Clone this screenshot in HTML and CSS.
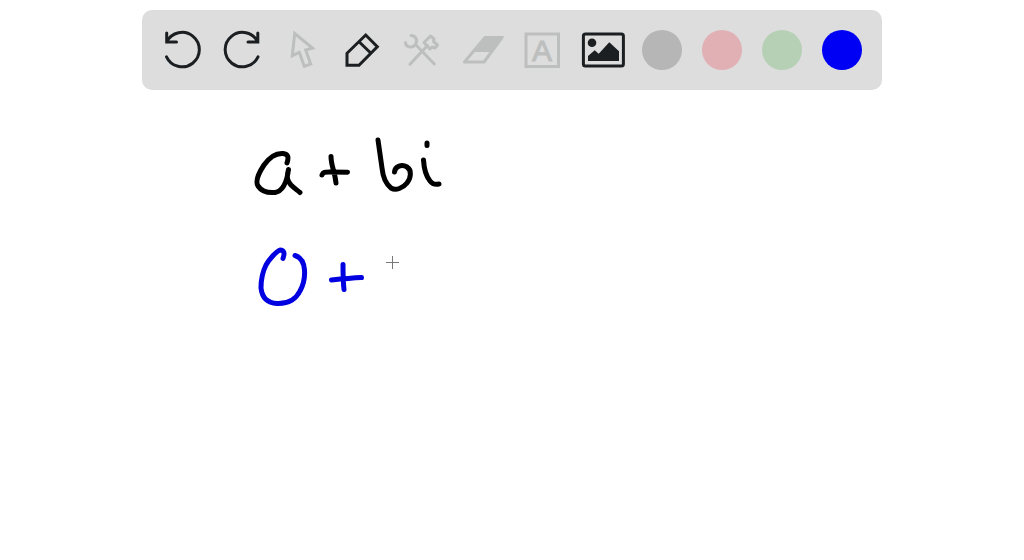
FILE: index.html
```
<!DOCTYPE html>
<html lang="en">
<head>
    <meta charset="UTF-8">
    <meta name="viewport" content="width=device-width, initial-scale=1.0">
    <title>Whiteboard</title>
    <link rel="stylesheet" href="styles.css">
</head>
<body>
    <div class="toolbar">
        <button class="tool" type="button" aria-label="Undo">
            <svg class="icon" viewBox="-2 -2 44 44">
                <path d="M4.700 3V12H14.500M4.700 12A17.200 17.200 0 1 1 4.500 26.800"/>
            </svg>
        </button>
        <button class="tool" type="button" aria-label="Redo">
            <svg class="icon" viewBox="-2 -2 44 44">
                <path d="M35.800 3V12H26M35.800 12A17.200 17.200 0 1 0 36 26.800"/>
            </svg>
        </button>
        <button class="tool muted" type="button" aria-label="Select">
            <svg class="icon" viewBox="-2 -2 44 44">
                <path d="M12.700 3.500L30.500 18L23.700 20L28.700 34L22.300 36.300L17.300 22.300L10.300 25.700Z"/>
            </svg>
        </button>
        <button class="tool" type="button" aria-label="Pen">
            <svg class="icon" viewBox="-2 -2 44 44">
                <path d="M23.700 5L35.300 16.700L17 35.300H5V23.300ZM17.300 12L28.700 23"/>
            </svg>
        </button>
        <button class="tool muted" type="button" aria-label="Tools">
            <svg class="icon soft" viewBox="-2 -2 44 44">
                <path d="M9 5.500C14 5.500 16 10.500 13.500 14.500C10 19 3.500 17 3.500 12.500M14 15L32.300 34"/>
                <path d="M8 34.300L25.500 15.500M22 12.500L28.500 6L32 9L31.500 11.500L35.500 15L33 18L30 17L28 19Z"/>
            </svg>
        </button>
        <button class="tool muted" type="button" aria-label="Eraser">
            <svg class="icon soft" viewBox="-2 -2 44 44">
                <path d="M23 7.500H40L22 32H2.500Z"/>
                <path class="solid" d="M23 6H42L30.500 22H9.500Z"/>
            </svg>
        </button>
        <button class="tool muted" type="button" aria-label="Text">
            <svg class="icon" viewBox="-2 -2 44 44">
                <rect x="4" y="4" width="32.500" height="32.500"/>
                <text class="letter" x="20" y="31">A</text>
            </svg>
        </button>
        <button class="tool" type="button" aria-label="Image">
            <svg class="icon" viewBox="-2 -2 44 44">
                <rect x="1.400" y="4" width="40" height="32" rx="2"/>
                <circle class="solid" cx="10" cy="12.700" r="4.300"/>
                <path class="solid" d="M6 31V26L12.700 20.300L16.700 23.700L27.300 12.300L37 21.300V31Z"/>
            </svg>
        </button>
        <label class="swatch"><input class="gray" type="radio" name="color" aria-label="Gray"></label>
        <label class="swatch"><input class="pink" type="radio" name="color" aria-label="Pink"></label>
        <label class="swatch"><input class="green" type="radio" name="color" aria-label="Green"></label>
        <label class="swatch"><input class="blue" type="radio" name="color" aria-label="Blue" checked></label>
    </div>

    <!-- pen strokes on the board -->
    <svg class="board" viewBox="142 90 740 460">
        <g class="ink">
            <path d="M287 163C289 157 288 154 283 153.500C276 153 269 158 264 165C258 174 255 181 258 186C262 192 269 193 275 192.500C284 191 287 181 288.500 169.500C286 179 288 181 291 185C294 188 297 190 300 192.500"/>
            <path d="M322 175C323 172 325 172 329 172L347.500 172.300M331 156.500C331 166 335 172 336 183"/>
            <path d="M378 140L382 168C383 178 386 184 391 188C396 191 403 188 407 183C411 178 412 170 407 167C402 164 395 166 394.500 172"/>
            <path d="M427 143V145.500M423.500 160C424 169 426 176 430 181C433 185 436 184.500 439 184"/>
        </g>
        <g class="ink ink-blue">
            <path d="M283 258.500C285 253 284 250 280 250C277 251 270 258 266 265C262 273 261 281 261 288C262 297 267 303 277 303.500C289 304 296 299 300 291C304 284 305 277 304.500 270C304 262 300 257 295 255.500"/>
            <path d="M331.500 280C341 279 351 278 361.500 277.500M343 264.500C343 273 343 281 344 289.500"/>
        </g>
        <path class="crosshair" d="M386 262.500H399M392.500 256V269"/>
    </svg>
</body>
</html>
```

FILE: styles.css
```
* {
    box-sizing: border-box;
}

body {
    margin: 0;
    padding: 10px;
    background: #fff;
    font-family: "Liberation Sans", Arial, sans-serif;
}

.toolbar {
    display: flex;
    justify-content: center;
    width: fit-content;
    margin: 0 auto;
    padding: 10px;
    background: #ddd;
    border-radius: 10px;
}

.tool,
.swatch {
    display: flex;
    align-items: center;
    justify-content: center;
    width: 60px;
    height: 60px;
    padding: 0;
    border: none;
    background: none;
    color: #1c1f21;
    cursor: pointer;
}

.tool.muted {
    color: #bdbfbe;
}

.icon {
    width: 44px;
    height: 44px;
    overflow: visible;
    fill: none;
    stroke: currentColor;
    stroke-width: 3px;
    stroke-linecap: round;
    stroke-linejoin: miter;
}

.icon.soft {
    stroke-linejoin: round;
}

.icon .solid {
    fill: currentColor;
    stroke: none;
}

.icon .letter {
    fill: currentColor;
    stroke-width: 1px;
    font-size: 30px;
    text-anchor: middle;
}

.swatch input {
    appearance: none;
    width: 40px;
    height: 40px;
    margin: 0;
    border-radius: 50%;
    cursor: pointer;
}

.gray { background: #b6b6b6; }
.pink { background: #e0b0b5; }
.green { background: #b6d0b5; }
.blue { background: #0000f5; }

.board {
    display: block;
    width: 100%;
    max-width: 740px;
    margin: 0 auto;
}

.ink {
    fill: none;
    stroke: #000;
    stroke-width: 5px;
    stroke-linecap: round;
    stroke-linejoin: round;
}

.ink-blue {
    stroke: #0000e0;
}

.crosshair {
    stroke: #777;
    stroke-width: 1px;
}
```
